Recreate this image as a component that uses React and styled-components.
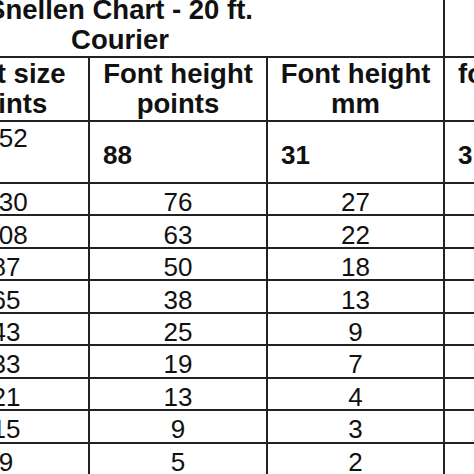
import React from 'react';
import styled, { createGlobalStyle } from 'styled-components';

const GlobalStyle = createGlobalStyle`
  html, body {
    margin: 0;
    padding: 0;
    background: #fff;
  }
  body {
    font-family: 'Liberation Sans', Arial, sans-serif;
    color: #111;
  }
`;

const rows = [
  ['20/200', '130', '76', '27', '19'],
  ['20/160', '108', '63', '22', '15'],
  ['20/125', '87', '50', '18', '12'],
  ['20/100', '65', '38', '13', '9'],
  ['20/63', '43', '25', '9', '6'],
  ['20/50', '33', '19', '7', '5'],
  ['20/32', '21', '13', '4', '3'],
  ['20/25', '15', '9', '3', '2'],
  ['20/16', '9', '5', '2', '1'],
];

const Viewport = styled.div`
  width: 474px;
  height: 474px;
  overflow: hidden;
  background: #fff;
`;

/* the chart is cropped: only part of it falls inside the picture */
const Sheet = styled.table`
  margin: -6px 0 0 -205px;
  border-collapse: collapse;
  table-layout: fixed;
  width: 1008px;
  font-size: 26px;
  line-height: 30px;

  td, th {
    border: 2px solid #222;
    padding: 0;
  }
`;

const TitleRow = styled.tr`
  height: 63px;
`;

const TitleCell = styled.th`
  font-size: 27.5px;
  font-weight: 700;
  text-align: center;
  vertical-align: middle;
  white-space: nowrap;
  &&& {
    border-top: none;
  }
`;

const HeadRow = styled.tr`
  height: 64px;
`;

const HeadCell = styled.th`
  font-size: 27.5px;
  font-weight: 700;
  text-align: ${(p) => p.$align || 'center'};
  vertical-align: top;
  white-space: nowrap;
  &&& {
    padding-left: ${(p) => (p.$align === 'left' ? '13px' : '0')};
    padding-top: 1px;
  }
`;

const FirstRow = styled.tr`
  height: 62px;
`;

const Row = styled.tr`
  height: 32.45px;
`;

const DataCell = styled.td`
  font-weight: ${(p) => (p.$bold ? 700 : 400)};
  text-align: ${(p) => p.$align || 'center'};
  vertical-align: ${(p) => p.$valign || 'middle'};
  line-height: 24px;
  white-space: nowrap;
  &&& {
    padding-left: ${(p) => (p.$align === 'left' ? '13px' : '0')};
    padding-top: ${(p) => (p.$valign === 'top' ? '4px' : '6px')};
  }
`;

export default function App() {
  return (
    <>
      <GlobalStyle />
      <Viewport>
        <Sheet>
          <colgroup>
            <col style={{ width: 127 }} />
            <col style={{ width: 166 }} />
            <col style={{ width: 178 }} />
            <col style={{ width: 177 }} />
            <col style={{ width: 360 }} />
          </colgroup>
          <tbody>
            <TitleRow>
              <TitleCell colSpan={4}>
                Snellen Chart - 20 ft.
                <br />
                Courier
              </TitleCell>
              <TitleCell>
                Snellen Chart - 20 ft.
                <br />
                Arial
              </TitleCell>
            </TitleRow>
            <HeadRow>
              <HeadCell>Line</HeadCell>
              <HeadCell>
                Font size
                <br />
                points
              </HeadCell>
              <HeadCell>
                Font height
                <br />
                points
              </HeadCell>
              <HeadCell>
                Font height
                <br />
                mm
              </HeadCell>
              <HeadCell $align="left">font size points</HeadCell>
            </HeadRow>
            <FirstRow>
              <DataCell $valign="top">20/400</DataCell>
              <DataCell $valign="top">152</DataCell>
              <DataCell $bold $align="left">88</DataCell>
              <DataCell $bold $align="left">31</DataCell>
              <DataCell $bold $align="left">31</DataCell>
            </FirstRow>
            {rows.map((r) => (
              <Row key={r[0]}>
                {r.map((v, i) => (
                  <DataCell key={i}>{v}</DataCell>
                ))}
              </Row>
            ))}
          </tbody>
        </Sheet>
      </Viewport>
    </>
  );
}
